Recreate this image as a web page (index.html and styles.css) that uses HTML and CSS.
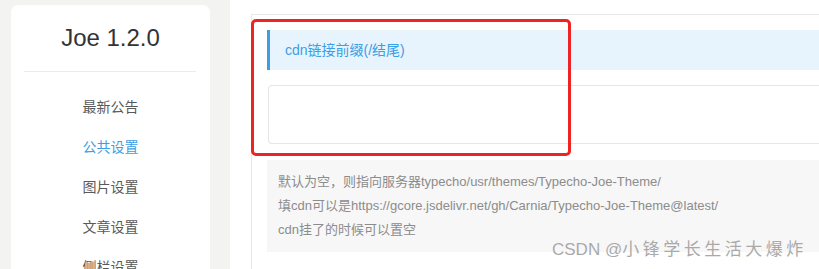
FILE: index.html
```html
<!DOCTYPE html>
<html lang="zh-CN">
<head>
<meta charset="utf-8">
<title>Joe 1.2.0</title>
<link rel="stylesheet" href="styles.css">
</head>
<body>
<div class="page">
  <aside class="sidebar">
    <h1 class="brand">Joe 1.2.0</h1>
    <div class="divider"></div>
    <ul class="menu">
      <li>最新公告</li>
      <li class="active">公共设置</li>
      <li>图片设置</li>
      <li>文章设置</li>
      <li>侧栏设置</li>
    </ul>
  </aside>
  <main class="main">
    <section class="panel">
      <div class="label">cdn链接前缀(/结尾)</div>
      <div class="input"></div>
      <div class="desc">
        <p>默认为空，则指向服务器typecho/usr/themes/Typecho-Joe-Theme/</p>
        <p>填cdn可以是https://gcore.jsdelivr.net/gh/Carnia/Typecho-Joe-Theme@latest/</p>
        <p>cdn挂了的时候可以置空</p>
      </div>
    </section>
  </main>
</div>
<div class="highlight"></div>
<div class="watermark">CSDN @<span class="wm-cjk">小锋学长生活大爆炸</span></div>
</body>
</html>
```

FILE: styles.css
```css
* { box-sizing: border-box; }
html, body {
  margin: 0;
  padding: 0;
  height: 100%;
  overflow: hidden;
}
body {
  background: #f3f3f1;
  font-family: "Liberation Sans", "Noto Sans CJK SC", sans-serif;
  position: relative;
}
.page {
  display: flex;
  height: 269px;
}
.sidebar {
  width: 199px;
  margin: 5px 0 0 11px;
  background: #fff;
  border-radius: 7px 7px 0 0;
  padding-top: 16px;
  flex: none;
}
.brand {
  margin: 0 0 16px;
  font-weight: normal;
  font-size: 24px;
  line-height: 34px;
  color: #333;
  text-align: center;
}
.divider {
  height: 1px;
  background: #ececec;
  margin: 0 14px 15px 13px;
}
.menu {
  list-style: none;
  margin: 0;
  padding: 0;
}
.menu li {
  text-align: center;
  font-size: 14px;
  line-height: 40px;
  height: 40px;
  color: #595959;
}
.menu li.active { color: #3c9ee5; }
.main {
  flex: 1;
  margin-left: 20px;
  background: #fff;
  padding: 14px 0 0 21px;
}
.panel {
  border: 1px solid #e8e8e8;
  border-right: none;
  border-bottom: none;
  height: 100%;
  padding: 15px 0 0 15px;
}
.label {
  height: 40px;
  line-height: 40px;
  background: #e8f4fd;
  border-left: 3px solid #3c9ee5;
  padding-left: 15px;
  font-size: 14px;
  color: #3c9ee5;
}
.input {
  margin-top: 15px;
  margin-left: 1px;
  height: 59px;
  border: 1px solid #e6e6e6;
  border-right: none;
  border-radius: 4px 0 0 4px;
}
.desc {
  margin-top: 16px;
  background: #f7f7f7;
  padding: 10px 0 10px 11px;
}
.desc p {
  margin: 0;
  font-size: 13px;
  line-height: 24px;
  color: #8c8c8c;
  white-space: nowrap;
}
.highlight {
  position: absolute;
  left: 251px;
  top: 19px;
  width: 320px;
  height: 137px;
  border: 3px solid #ee2424;
  border-radius: 5px;
}
.watermark {
  position: absolute;
  left: 552px;
  top: 239px;
  font-size: 17px;
  line-height: 22px;
  color: #a9a9a9;
  white-space: nowrap;
  text-shadow: 0 0 1px #fff;
}
.wm-cjk { letter-spacing: 3.5px; }
```
